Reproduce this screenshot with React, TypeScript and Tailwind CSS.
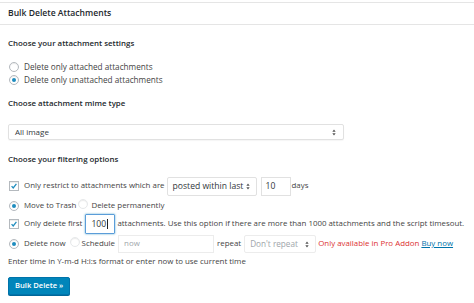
import React from "react"

function Radio({ checked = false, faint = false }: { checked?: boolean; faint?: boolean }) {
  return (
    <span
      className={`inline-flex h-[10px] w-[10px] shrink-0 items-center justify-center rounded-full border bg-white shadow-[inset_0_1px_1px_rgba(0,0,0,0.08)] ${
        faint ? "border-[#e6e8ea]" : "border-[#b4b9be]"
      }`}
    >
      {checked && <span className="h-[4px] w-[4px] rounded-full bg-[#1e8cbe]" />}
    </span>
  )
}

function Checkbox() {
  return (
    <span className="inline-flex h-[10px] w-[10px] shrink-0 items-center justify-center border border-[#b4b9be] bg-white shadow-[inset_0_1px_1px_rgba(0,0,0,0.08)]">
      <svg viewBox="0 0 10 10" className="h-[8px] w-[8px]">
        <path d="M2 5.2 L4 7.4 L8 2.4" fill="none" stroke="#1e8cbe" strokeWidth="1.6" />
      </svg>
    </span>
  )
}

function Arrows() {
  return (
    <svg viewBox="0 0 6 10" className="h-[7px] w-[4px] shrink-0">
      <path d="M3 0.5 L5.5 4 L0.5 4 Z M3 9.5 L5.5 6 L0.5 6 Z" fill="#555" />
    </svg>
  )
}

export default function App() {
  return (
    <div
      className="h-[303px] w-[474px] overflow-hidden bg-white text-[7.9px] text-[#444]"
      style={{ fontFamily: '"Open Sans", "Liberation Sans", sans-serif' }}
    >
      {/* Header */}
      <div className="mt-[2px] flex h-[23px] items-center border-y border-[#e5e5e5] px-[8px] text-[8.6px] font-semibold text-[#23282d]">
        Bulk Delete Attachments
      </div>

      <div className="px-[8px]">
        <div className="mt-[13px] flex h-[12px] items-center text-[7.9px] font-semibold text-[#23282d]">
          Choose your attachment settings
        </div>

        <div className="mt-[11px] flex h-[12px] items-center gap-[5px] pl-[1px] text-[8.2px]">
          <Radio />
          <span>Delete only attached attachments</span>
        </div>
        <div className="mt-[1px] flex h-[12px] items-center gap-[5px] pl-[1px] text-[8.2px]">
          <Radio checked />
          <span>Delete only unattached attachments</span>
        </div>

        <div className="mt-[12px] flex h-[12px] items-center text-[7.9px] font-semibold text-[#23282d]">
          Choose attachment mime type
        </div>

        <div className="mt-[14px] flex h-[16px] w-[336px] items-center justify-between rounded-[2px] border border-[#e1e1e1] bg-white pl-[6px] pr-[7px] text-[8px] text-[#32373c] shadow-[0_1px_1px_rgba(0,0,0,0.04)]">
          <span>All image</span>
          <Arrows />
        </div>

        <div className="mt-[14px] flex h-[12px] items-center text-[7.9px] font-semibold text-[#23282d]">
          Choose your filtering options
        </div>

        {/* Row: restrict */}
        <div className="mt-[10px] flex h-[20px] items-center pl-[1px]">
          <Checkbox />
          <span className="ml-[5px]">Only restrict to attachments which are</span>
          <div className="ml-[2px] flex h-[19px] w-[90px] items-center justify-between rounded-[2px] border border-[#e1e1e1] pl-[5px] pr-[6px] text-[8.6px] text-[#32373c]">
            <span>posted within last</span>
            <Arrows />
          </div>
          <div className="ml-[4px] flex h-[19px] w-[30px] items-center border border-[#e1e1e1] pl-[4px] text-[8.6px] text-[#32373c]">
            10
          </div>
          <span className="ml-[1px]">days</span>
        </div>

        {/* Row: trash */}
        <div className="mt-[3px] flex h-[14px] items-center pl-[1px]">
          <Radio checked />
          <span className="ml-[5px]">Move to Trash</span>
          <span className="ml-[2px]">
            <Radio faint />
          </span>
          <span className="ml-[3px]">Delete permanently</span>
        </div>

        {/* Row: limit */}
        <div className="mt-[1px] flex h-[20px] items-center pl-[1px]">
          <Checkbox />
          <span className="ml-[5px]">Only delete first</span>
          <div className="ml-[3px] flex h-[20px] w-[30px] items-center rounded-[1px] border border-[#5b9dd9] pl-[5px] text-[8.6px] text-[#32373c] shadow-[0_0_2px_rgba(30,140,190,0.8)]">
            100<span className="ml-[1px] h-[10px] w-px bg-[#222]" />
          </div>
          <span className="ml-[2px]">
            attachments. Use this option if there are more than 1000 attachments and the script timesout.
          </span>
        </div>

        {/* Row: schedule */}
        <div className="mt-[1px] flex h-[18px] items-center pl-[1px]">
          <Radio checked />
          <span className="ml-[5px]">Delete now</span>
          <span className="ml-[4px]">
            <Radio faint />
          </span>
          <span className="ml-[2px]">Schedule</span>
          <div className="ml-[3px] flex h-[18px] w-[96px] items-center border border-[#ececec] pl-[5px] text-[#a0a5aa]">
            now
          </div>
          <span className="ml-[3px]">repeat</span>
          <div className="ml-[3px] flex h-[18px] w-[72px] items-center justify-between rounded-[2px] border border-[#ececec] pl-[5px] pr-[6px] text-[8.2px] text-[#a0a5aa]">
            <span>Don't repeat</span>
            <Arrows />
          </div>
          <span className="ml-[2px] text-[#dc3232]">Only available in Pro Addon</span>
          <span className="ml-[2px] text-[#0073aa] underline">Buy now</span>
        </div>

        <div className="mt-[3px] flex h-[12px] items-center">
          Enter time in Y-m-d H:i:s format or enter now to use current time
        </div>

        <button className="mt-[9px] flex h-[18px] items-center rounded-[2px] border border-[#0073aa] bg-[#0085ba] px-[6px] text-[7.6px] font-semibold text-white shadow-[0_1px_0_#006799]">
          Bulk Delete »
        </button>
      </div>
    </div>
  )
}
